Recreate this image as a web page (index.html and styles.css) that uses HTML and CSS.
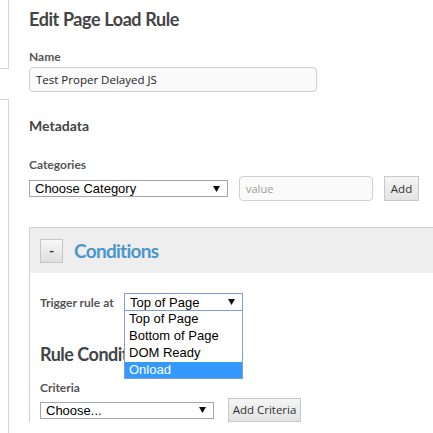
FILE: index.html
```html
<!DOCTYPE html>
<html>
<head>
<meta charset="utf-8">
<link rel="stylesheet" href="styles.css">
</head>
<body>
<div class="page">
  <div class="rail">
    <div class="rail-top"></div>
    <div class="rail-bottom"></div>
  </div>
  <main class="main">
    <h1 class="title">Edit Page Load Rule</h1>
    <div class="lbl lbl-name">Name</div>
    <div class="input name-input">Test Proper Delayed JS</div>
    <h2 class="section">Metadata</h2>
    <div class="lbl lbl-cat">Categories</div>
    <div class="cat-row">
      <div class="select cat-select"><span>Choose Category</span><svg class="arrow" width="7" height="6" viewBox="0 0 7 6"><polygon points="0,0 7,0 3.5,6" fill="#111"/></svg></div>
      <div class="input value-input">value</div>
      <div class="btn btn-add">Add</div>
    </div>
    <section class="panel">
      <div class="panel-head">
        <div class="toggle">-</div>
        <div class="panel-title">Conditions</div>
      </div>
      <div class="panel-body">
        <div class="trigger-row">
          <div class="lbl trigger-lbl">Trigger rule at</div>
          <div class="dd-wrap">
            <div class="select open-select"><span>Top of Page</span><svg class="arrow" width="7" height="6" viewBox="0 0 7 6"><polygon points="0,0 7,0 3.5,6" fill="#111"/></svg></div>
            <ul class="dd-list">
              <li class="dd-item">Top of Page</li>
              <li class="dd-item">Bottom of Page</li>
              <li class="dd-item">DOM Ready</li>
              <li class="dd-item dd-active">Onload</li>
            </ul>
          </div>
        </div>
        <h2 class="rule-title">Rule Conditions</h2>
        <div class="lbl lbl-crit">Criteria</div>
        <div class="crit-row">
          <div class="select crit-select"><span>Choose...</span><svg class="arrow" width="7" height="6" viewBox="0 0 7 6"><polygon points="0,0 7,0 3.5,6" fill="#111"/></svg></div>
          <div class="btn btn-crit">Add Criteria</div>
        </div>
      </div>
    </section>
  </main>
</div>
</body>
</html>
```
FILE: styles.css
```css
* { box-sizing: border-box; }
html, body { margin: 0; padding: 0; background: #fff; }
body { width: 433px; height: 433px; overflow: hidden; }

.page { display: flex; height: 433px; }

.rail { width: 9px; flex: none; display: flex; flex-direction: column; }
.rail-top { height: 69px; border-right: 1px solid #d4d4d4; border-bottom: 1px solid #d4d4d4; }
.rail-bottom { flex: 1; margin-top: 30px; border-right: 1px solid #d4d4d4; border-top: 1px solid #d4d4d4; }

.main { flex: 1; padding-left: 20px; min-width: 0; }

.title {
  margin: 8px 0 0; font-family: Lato, sans-serif; font-weight: 700;
  font-size: 18px; line-height: 22px; color: #444; letter-spacing: -0.4px;
}
.lbl {
  font-family: Lato, sans-serif; font-weight: 700; font-size: 12px;
  line-height: 15px; color: #555;
}
.lbl-name { margin-top: 19px; }
.input {
  border: 1px solid #cfcfcf; border-radius: 4px; background: #fafafa;
  height: 25px; font-family: "Open Sans", sans-serif; font-size: 11.5px;
  line-height: 23px; padding-left: 6px; color: #222;
}
.name-input { margin-top: 3px; width: 288px; }
.section {
  margin: 25px 0 0; font-family: Lato, sans-serif; font-weight: 700;
  font-size: 14px; line-height: 18px; color: #444;
}
.lbl-cat { margin-top: 22px; }

.cat-row { margin-top: 4px; display: flex; align-items: center; gap: 11px; }
.select {
  display: flex; align-items: center; justify-content: space-between;
  border: 1px solid #a6a6a6; background: #fff; height: 17px;
  font-family: "Liberation Sans", Arial, sans-serif; font-size: 13px;
  color: #000; padding: 0 7px 0 5px; line-height: 15px;
}
.arrow { flex: none; }
.cat-select { width: 199px; }
.value-input { width: 134px; color: #999; font-size: 11px; }
.btn {
  border: 1px solid #c9c9c9; background: linear-gradient(#f5f5f5, #e3e3e3);
  height: 25px; font-family: "Open Sans", sans-serif; font-size: 11.5px;
  line-height: 23px; color: #333; text-align: center;
}
.btn-add { width: 35px; }

.panel { margin-top: 26px; border-top: 1px solid #cfcfcf; border-left: 1px solid #cfcfcf; }
.panel-head {
  height: 45px; background: #eeeeee; display: flex; align-items: center;
  padding-left: 10px; gap: 11px;
}
.toggle {
  width: 23px; height: 24px; border: 1px solid #c6c6c6;
  background: linear-gradient(#f8f8f8, #dedede);
  font-family: Lato, sans-serif; font-weight: 700; font-size: 14px;
  line-height: 21px; text-align: center; color: #333;
}
.panel-title {
  font-family: Lato, sans-serif; font-weight: 700; font-size: 19px;
  color: #4b97cc; line-height: 24px; letter-spacing: -0.7px;
}
.panel-body { padding: 20px 0 0 10px; }

.trigger-row { display: flex; align-items: center; height: 18px; }
.trigger-lbl { width: 84px; flex: none; font-size: 12px; }
.dd-wrap { position: relative; width: 119px; }
.open-select { height: 18px; border-color: #7c9fd8; }
.dd-list {
  position: absolute; left: 0; top: 18px; width: 119px; margin: 0; padding: 0;
  list-style: none; border: 1px solid #7c9fd8; border-top: none; background: #fff;
  z-index: 2;
}
.dd-item {
  height: 17px; line-height: 16px; padding-left: 4px;
  font-family: "Liberation Sans", Arial, sans-serif; font-size: 13px; color: #000;
}
.dd-active { background: #3399ff; color: #fff; height: 16px; }

.rule-title {
  margin: 32px 0 0; font-family: Lato, sans-serif; font-weight: 700;
  font-size: 18px; line-height: 22px; color: #444; letter-spacing: -0.5px;
}
.lbl-crit { margin-top: 15px; }
.crit-row { margin-top: 3px; display: flex; align-items: center; gap: 14px; }
.crit-select { width: 174px; }
.btn-crit { width: 73px; height: 24px; line-height: 22px; }
```
